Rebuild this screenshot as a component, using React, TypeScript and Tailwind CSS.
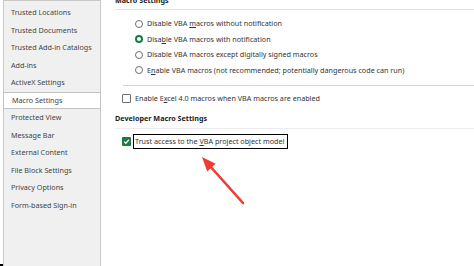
import React from 'react'

const navItems = [
  'Trusted Locations',
  'Trusted Documents',
  'Trusted Add-in Catalogs',
  'Add-ins',
  'ActiveX Settings',
  'Macro Settings',
  'Protected View',
  'Message Bar',
  'External Content',
  'File Block Settings',
  'Privacy Options',
  'Form-based Sign-in',
]

function Radio({ checked }: { checked?: boolean }) {
  return checked ? (
    <span className="h-[8px] w-[8px] shrink-0 rounded-full border-[2.5px] border-[#1b7a43] bg-white" />
  ) : (
    <span className="h-[8px] w-[8px] shrink-0 rounded-full border border-[#6e6e6e] bg-white" />
  )
}

function RadioRow({ checked, children }: { checked?: boolean; children: React.ReactNode }) {
  return (
    <div className="flex h-[15.5px] items-center gap-[3px] pl-[20px]">
      <Radio checked={checked} />
      <span className="pl-[1px]">{children}</span>
    </div>
  )
}

export default function App() {
  return (
    <div
      className="relative flex h-[266px] w-[474px] overflow-hidden bg-white text-[7.2px] leading-[11px] text-[#333]"
      style={{ fontFamily: '"Noto Sans", "Open Sans", sans-serif' }}
    >
      {/* left nav */}
      <div className="ml-[3px] flex w-[98px] shrink-0 flex-col border-x border-t border-[#c9c9c9] bg-[#f0f0f0] pt-[3px] text-[#444]">
        {navItems.map((item) =>
          item === 'Macro Settings' ? (
            <div
              key={item}
              className="-mx-px flex h-[17.5px] items-center border border-[#c2c2c2] bg-white pl-[8px]"
            >
              {item}
            </div>
          ) : (
            <div key={item} className="flex h-[17.5px] items-center whitespace-nowrap pl-[7px]">
              {item}
            </div>
          ),
        )}
      </div>

      {/* content */}
      <div className="flex flex-1 flex-col whitespace-nowrap pl-[14px]">
        <div className="-mt-[5px] font-bold text-[#222]">Macro Settings</div>
        <div className="mt-[3px] h-px bg-[#e2e2e2]" />

        <div className="mt-[6px] flex flex-col">
          <RadioRow>
            Disable VBA <u>m</u>acros without notification
          </RadioRow>
          <RadioRow checked>
            Disa<u>b</u>le VBA macros with notification
          </RadioRow>
          <RadioRow>Disable VBA macros except digitally signed macros</RadioRow>
          <RadioRow>
            E<u>n</u>able VBA macros (not recommended; potentially dangerous code can run)
          </RadioRow>
        </div>

        <div className="ml-[8px] mt-[7px] h-px bg-[#d6d6d6]" />

        <div className="mt-[5px] flex h-[14px] items-center gap-[4px] pl-[7px]">
          <span className="h-[9px] w-[9px] shrink-0 rounded-[1px] border border-[#6e6e6e] bg-white" />
          <span>
            Enable E<u>x</u>cel 4.0 macros when VBA macros are enabled
          </span>
        </div>

        <div className="mt-[8px] font-bold text-[#222]">Developer Macro Settings</div>
        <div className="mt-[4px] h-px bg-[#ececec]" />

        <div className="mt-[5px] flex h-[14px] items-center gap-[2px] pl-[7px]">
          <span className="flex h-[9px] w-[9px] shrink-0 items-center justify-center rounded-[1px] bg-[#1b7a43]">
            <svg width="7" height="7" viewBox="0 0 8 8">
              <path d="M1.3 4.2 L3.2 6 L6.8 2" fill="none" stroke="white" strokeWidth="1.4" />
            </svg>
          </span>
          <span className="border border-black py-px pl-px pr-[3px] leading-[11px]">
            Trust access to the <u>V</u>BA project object model
          </span>
        </div>
      </div>

      {/* red annotation arrow */}
      <svg className="pointer-events-none absolute left-0 top-0" width="474" height="266">
        <line x1="243" y1="203" x2="209" y2="165" stroke="#ee3b34" strokeWidth="2.6" strokeLinecap="round" />
        <polygon points="202,157 207.2,171.5 215.6,163.8" fill="#ee3b34" />
      </svg>

      <div className="absolute bottom-0 left-0 h-[2px] w-[3px] bg-black" />
    </div>
  )
}
